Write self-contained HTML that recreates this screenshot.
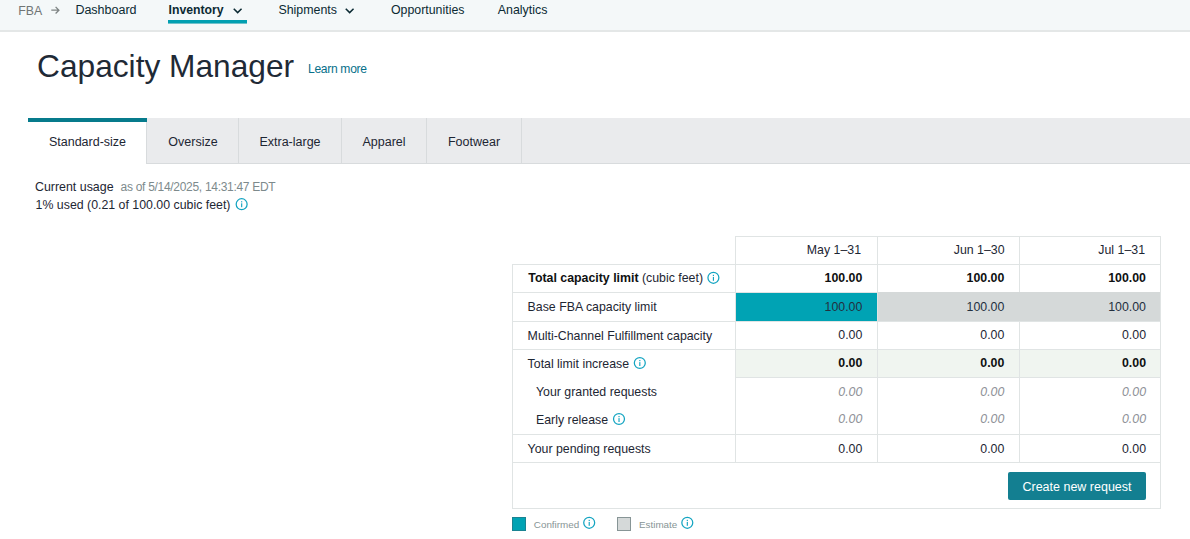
<!DOCTYPE html>
<html><head><meta charset="utf-8"><style>
html,body{margin:0;padding:0;background:#fff;width:1190px;height:539px;overflow:hidden;position:relative}
.t{position:absolute;line-height:20px;height:20px;white-space:nowrap;font-family:"Liberation Sans",sans-serif}
</style></head><body>
<div style="position:absolute;left:0px;top:0px;width:1190px;height:30px;background:#f4f8f9;"></div>
<div style="position:absolute;left:0px;top:30px;width:1190px;height:2px;background:#e4e7e7;"></div>
<div class="t" style="left:18.2px;top:0.94px;font-size:12.3px;font-weight:400;color:#707575;font-style:normal;">FBA</div>
<svg style="position:absolute;left:50px;top:5px" width="11" height="10" viewBox="0 0 11 10"><path d="M1.3 5.2 H8.6 M5.6 1.9 L8.9 5.2 L5.6 8.5" fill="none" stroke="#7d8383" stroke-width="1.3"/></svg>
<div class="t" style="left:75.4px;top:-0.33px;font-size:12.5px;font-weight:400;color:#0b2a33;font-style:normal;">Dashboard</div>
<div class="t" style="left:168.5px;top:-0.24px;font-size:12.25px;font-weight:700;color:#0b2a33;font-style:normal;">Inventory</div>
<svg style="position:absolute;left:230.6px;top:6.300000000000001px" width="13.300000000000011" height="9.399999999999999" viewBox="0 0 13.300000000000011 9.399999999999999"><polyline points="2.75,2.75 6.650000000000006,6.649999999999999 10.550000000000011,2.75" fill="none" stroke="#0b2a33" stroke-width="1.5"/></svg>
<div style="position:absolute;left:168px;top:20px;width:79px;height:4px;background:linear-gradient(#01a0b2 0, #01a0b2 75%, rgba(1,150,165,0.55) 75%);"></div>
<div class="t" style="left:278.4px;top:-0.30px;font-size:12.4px;font-weight:400;color:#0b2a33;font-style:normal;">Shipments</div>
<svg style="position:absolute;left:343.0px;top:6.300000000000001px" width="13.300000000000011" height="9.399999999999999" viewBox="0 0 13.300000000000011 9.399999999999999"><polyline points="2.75,2.75 6.650000000000006,6.649999999999999 10.550000000000011,2.75" fill="none" stroke="#0b2a33" stroke-width="1.5"/></svg>
<div class="t" style="left:391.0px;top:-0.28px;font-size:12.35px;font-weight:400;color:#0b2a33;font-style:normal;">Opportunities</div>
<div class="t" style="left:497.8px;top:-0.30px;font-size:12.4px;font-weight:400;color:#0b2a33;font-style:normal;">Analytics</div>
<div class="t" style="left:37.0px;top:56.02px;font-size:31.7px;font-weight:400;color:#1f2a36;font-style:normal;">Capacity Manager</div>
<div class="t" style="left:308.0px;top:59.11px;font-size:12.1px;font-weight:400;color:#07708a;font-style:normal;letter-spacing:-0.32px;">Learn more</div>
<div style="position:absolute;left:147px;top:118px;width:1043px;height:45px;background:#eaebed;"></div>
<div style="position:absolute;left:146px;top:163px;width:1044px;height:1px;background:#d8dbdd;"></div>
<div style="position:absolute;left:28px;top:118px;width:119px;height:4px;background:#067b8c;"></div>
<div style="position:absolute;left:146px;top:122px;width:1px;height:42px;background:#d8dbdd;"></div>
<div style="position:absolute;left:238px;top:118px;width:1px;height:45px;background:#d8dbdd;"></div>
<div style="position:absolute;left:341px;top:118px;width:1px;height:45px;background:#d8dbdd;"></div>
<div style="position:absolute;left:426px;top:118px;width:1px;height:45px;background:#d8dbdd;"></div>
<div style="position:absolute;left:521px;top:118px;width:1px;height:45px;background:#d8dbdd;"></div>
<div class="t" style="left:28px;width:119px;text-align:center;top:131.97px;font-size:12.5px;color:#1d2633">Standard-size</div>
<div class="t" style="left:148px;width:90px;text-align:center;top:131.97px;font-size:12.5px;color:#1d2633">Oversize</div>
<div class="t" style="left:239px;width:102px;text-align:center;top:131.97px;font-size:12.5px;color:#1d2633">Extra-large</div>
<div class="t" style="left:342px;width:84px;text-align:center;top:131.97px;font-size:12.5px;color:#1d2633">Apparel</div>
<div class="t" style="left:427px;width:94px;text-align:center;top:131.97px;font-size:12.5px;color:#1d2633">Footwear</div>
<div class="t" style="left:35.0px;top:177.00px;font-size:12.4px;font-weight:400;color:#1d2633;font-style:normal;">Current usage</div>
<div class="t" style="left:120.6px;top:176.84px;font-size:12px;font-weight:400;color:#7d8a8c;font-style:normal;letter-spacing:-0.3px;">as of 5/14/2025, 14:31:47 EDT</div>
<div class="t" style="left:35.6px;top:194.52px;font-size:12.35px;font-weight:400;color:#1d2633;font-style:normal;">1% used (0.21 of 100.00 cubic feet)</div>
<svg style="position:absolute;left:233px;top:196px" width="16" height="16" viewBox="0 0 16 16"><circle cx="8.65" cy="8.20" r="5.47" fill="none" stroke="#13a4c1" stroke-width="1.25"/><rect x="8.10" y="5.20" width="1.15" height="1.2" fill="#13a4c1"/><rect x="8.10" y="7.30" width="1.15" height="3.9" fill="#13a4c1"/></svg>
<div style="position:absolute;left:736px;top:293px;width:141px;height:28px;background:#00a3b4;"></div>
<div style="position:absolute;left:736px;top:350px;width:425px;height:27px;background:#f0f5f0;"></div>
<div style="position:absolute;left:735px;top:236px;width:426px;height:1px;background:#e0e4e4;"></div>
<div style="position:absolute;left:735px;top:236px;width:1px;height:226px;background:#e0e4e4;"></div>
<div style="position:absolute;left:877px;top:236px;width:1px;height:226px;background:#e0e4e4;"></div>
<div style="position:absolute;left:1019px;top:236px;width:1px;height:226px;background:#e0e4e4;"></div>
<div style="position:absolute;left:1160px;top:236px;width:1px;height:273px;background:#e0e4e4;"></div>
<div style="position:absolute;left:512px;top:264px;width:1px;height:245px;background:#e0e4e4;"></div>
<div style="position:absolute;left:512px;top:264px;width:649px;height:1px;background:#e0e4e4;"></div>
<div style="position:absolute;left:512px;top:292px;width:649px;height:1px;background:#e0e4e4;"></div>
<div style="position:absolute;left:512px;top:321px;width:649px;height:1px;background:#e0e4e4;"></div>
<div style="position:absolute;left:512px;top:349px;width:649px;height:1px;background:#e0e4e4;"></div>
<div style="position:absolute;left:512px;top:434px;width:649px;height:1px;background:#e0e4e4;"></div>
<div style="position:absolute;left:512px;top:462px;width:649px;height:1px;background:#e0e4e4;"></div>
<div style="position:absolute;left:512px;top:508px;width:649px;height:1px;background:#e0e4e4;"></div>
<div style="position:absolute;left:735px;top:377px;width:426px;height:1px;background:#e0e4e4;"></div>
<div style="position:absolute;left:878px;top:292px;width:282px;height:29px;background:#d5d9d9;"></div>
<div class="t" style="right:329px;text-align:right;top:240.42px;font-size:12.35px;font-weight:400;color:#1d2633;font-style:normal;">May 1–31</div>
<div class="t" style="right:185.5px;text-align:right;top:240.42px;font-size:12.35px;font-weight:400;color:#1d2633;font-style:normal;">Jun 1–30</div>
<div class="t" style="right:45px;text-align:right;top:240.42px;font-size:12.35px;font-weight:400;color:#1d2633;font-style:normal;">Jul 1–31</div>
<div class="t" style="right:327.70000000000005px;text-align:right;top:268.42px;font-size:12.35px;font-weight:700;color:#0f1111;font-style:normal;">100.00</div>
<div class="t" style="right:185.70000000000005px;text-align:right;top:268.42px;font-size:12.35px;font-weight:700;color:#0f1111;font-style:normal;">100.00</div>
<div class="t" style="right:44px;text-align:right;top:268.42px;font-size:12.35px;font-weight:700;color:#0f1111;font-style:normal;">100.00</div>
<div class="t" style="right:327.70000000000005px;text-align:right;top:297.02px;font-size:12.35px;font-weight:400;color:#232f3e;font-style:normal;">100.00</div>
<div class="t" style="right:185.70000000000005px;text-align:right;top:297.02px;font-size:12.35px;font-weight:400;color:#232f3e;font-style:normal;">100.00</div>
<div class="t" style="right:44px;text-align:right;top:297.02px;font-size:12.35px;font-weight:400;color:#232f3e;font-style:normal;">100.00</div>
<div class="t" style="right:327.70000000000005px;text-align:right;top:325.42px;font-size:12.35px;font-weight:400;color:#1d2633;font-style:normal;">0.00</div>
<div class="t" style="right:185.70000000000005px;text-align:right;top:325.42px;font-size:12.35px;font-weight:400;color:#1d2633;font-style:normal;">0.00</div>
<div class="t" style="right:44px;text-align:right;top:325.42px;font-size:12.35px;font-weight:400;color:#1d2633;font-style:normal;">0.00</div>
<div class="t" style="right:327.70000000000005px;text-align:right;top:353.42px;font-size:12.35px;font-weight:700;color:#0f1111;font-style:normal;">0.00</div>
<div class="t" style="right:185.70000000000005px;text-align:right;top:353.42px;font-size:12.35px;font-weight:700;color:#0f1111;font-style:normal;">0.00</div>
<div class="t" style="right:44px;text-align:right;top:353.42px;font-size:12.35px;font-weight:700;color:#0f1111;font-style:normal;">0.00</div>
<div class="t" style="right:327.70000000000005px;text-align:right;top:381.92px;font-size:12.35px;font-weight:400;color:#8d9096;font-style:italic;">0.00</div>
<div class="t" style="right:185.70000000000005px;text-align:right;top:381.92px;font-size:12.35px;font-weight:400;color:#8d9096;font-style:italic;">0.00</div>
<div class="t" style="right:44px;text-align:right;top:381.92px;font-size:12.35px;font-weight:400;color:#8d9096;font-style:italic;">0.00</div>
<div class="t" style="right:327.70000000000005px;text-align:right;top:409.42px;font-size:12.35px;font-weight:400;color:#8d9096;font-style:italic;">0.00</div>
<div class="t" style="right:185.70000000000005px;text-align:right;top:409.42px;font-size:12.35px;font-weight:400;color:#8d9096;font-style:italic;">0.00</div>
<div class="t" style="right:44px;text-align:right;top:409.42px;font-size:12.35px;font-weight:400;color:#8d9096;font-style:italic;">0.00</div>
<div class="t" style="right:327.70000000000005px;text-align:right;top:438.92px;font-size:12.35px;font-weight:400;color:#1d2633;font-style:normal;">0.00</div>
<div class="t" style="right:185.70000000000005px;text-align:right;top:438.92px;font-size:12.35px;font-weight:400;color:#1d2633;font-style:normal;">0.00</div>
<div class="t" style="right:44px;text-align:right;top:438.92px;font-size:12.35px;font-weight:400;color:#1d2633;font-style:normal;">0.00</div>
<div class="t" style="left:528.3px;top:268.42px;font-size:12.35px;font-weight:400;color:#1d2633;font-style:normal;"><b style="color:#0f1111">Total capacity limit</b> (cubic feet)</div>
<svg style="position:absolute;left:705px;top:269px" width="16" height="16" viewBox="0 0 16 16"><circle cx="8.40" cy="8.80" r="5.47" fill="none" stroke="#13a4c1" stroke-width="1.25"/><rect x="7.85" y="5.80" width="1.15" height="1.2" fill="#13a4c1"/><rect x="7.85" y="7.90" width="1.15" height="3.9" fill="#13a4c1"/></svg>
<div class="t" style="left:527.6px;top:297.02px;font-size:12.35px;font-weight:400;color:#1d2633;font-style:normal;">Base FBA capacity limit</div>
<div class="t" style="left:527.6px;top:325.92px;font-size:12.35px;font-weight:400;color:#1d2633;font-style:normal;">Multi-Channel Fulfillment capacity</div>
<div class="t" style="left:527.6px;top:353.72px;font-size:12.35px;font-weight:400;color:#1d2633;font-style:normal;">Total limit increase</div>
<svg style="position:absolute;left:631px;top:355px" width="16" height="16" viewBox="0 0 16 16"><circle cx="8.80" cy="8.00" r="5.47" fill="none" stroke="#13a4c1" stroke-width="1.25"/><rect x="8.25" y="5.00" width="1.15" height="1.2" fill="#13a4c1"/><rect x="8.25" y="7.10" width="1.15" height="3.9" fill="#13a4c1"/></svg>
<div class="t" style="left:536px;top:382.42px;font-size:12.35px;font-weight:400;color:#1d2633;font-style:normal;">Your granted requests</div>
<div class="t" style="left:536px;top:409.72px;font-size:12.35px;font-weight:400;color:#1d2633;font-style:normal;">Early release</div>
<svg style="position:absolute;left:611px;top:411px" width="16" height="16" viewBox="0 0 16 16"><circle cx="8.00" cy="8.00" r="5.47" fill="none" stroke="#13a4c1" stroke-width="1.25"/><rect x="7.45" y="5.00" width="1.15" height="1.2" fill="#13a4c1"/><rect x="7.45" y="7.10" width="1.15" height="3.9" fill="#13a4c1"/></svg>
<div class="t" style="left:527.6px;top:439.42px;font-size:12.35px;font-weight:400;color:#1d2633;font-style:normal;">Your pending requests</div>
<div style="position:absolute;left:1008px;top:472px;width:138px;height:28px;background:#137f91;border-radius:2px"></div>
<div class="t" style="left:1008px;width:138px;text-align:center;top:476.97px;font-size:12.5px;color:#fff">Create new request</div>
<div style="position:absolute;left:512px;top:517px;width:14px;height:14px;background:#00a3b4;box-sizing:border-box;border:1px solid #1a8392"></div>
<div class="t" style="left:533.8px;top:514.79px;font-size:9.85px;font-weight:400;color:#879596;font-style:normal;">Confirmed</div>
<svg style="position:absolute;left:581px;top:514px" width="16" height="16" viewBox="0 0 16 16"><circle cx="8.20" cy="8.80" r="5.47" fill="none" stroke="#13a4c1" stroke-width="1.25"/><rect x="7.65" y="5.80" width="1.15" height="1.2" fill="#13a4c1"/><rect x="7.65" y="7.90" width="1.15" height="3.9" fill="#13a4c1"/></svg>
<div style="position:absolute;left:617px;top:517px;width:14px;height:14px;background:#d5d9d9;box-sizing:border-box;border:1px solid #879596"></div>
<div class="t" style="left:639.0px;top:514.79px;font-size:9.85px;font-weight:400;color:#879596;font-style:normal;">Estimate</div>
<svg style="position:absolute;left:679px;top:514px" width="16" height="16" viewBox="0 0 16 16"><circle cx="8.30" cy="8.80" r="5.47" fill="none" stroke="#13a4c1" stroke-width="1.25"/><rect x="7.75" y="5.80" width="1.15" height="1.2" fill="#13a4c1"/><rect x="7.75" y="7.90" width="1.15" height="3.9" fill="#13a4c1"/></svg>
</body></html>
